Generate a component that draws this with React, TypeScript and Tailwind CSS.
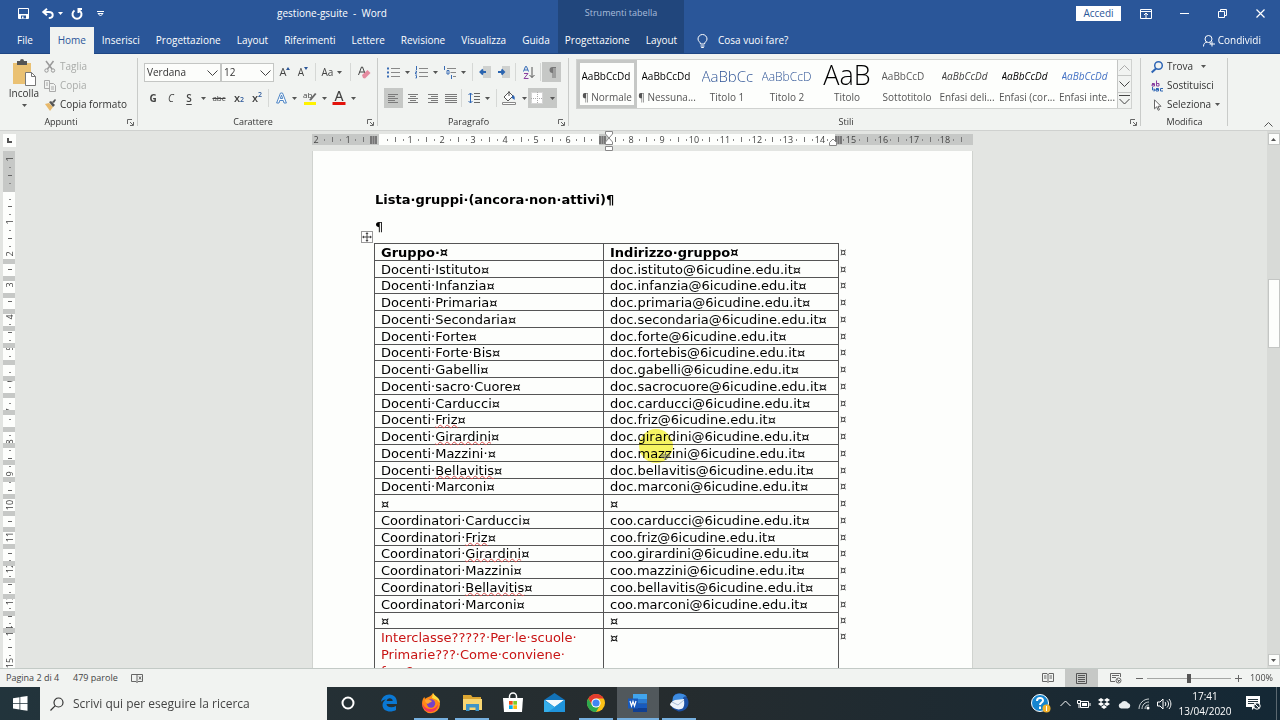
import React from "react";

type Kids = { children?: React.ReactNode };

function Icon({ w, h, children, className = "" }: Kids & { w: number; h: number; className?: string }) {
  return (
    <svg width={w} height={h} viewBox={`0 0 ${w} ${h}`} fill="none" className={`shrink-0 overflow-visible ${className}`} aria-hidden="true">
      {children}
    </svg>
  );
}

function Caret() {
  return (
    <Icon w={5} h={3}>
      <path d="M0 0h5L2.5 3z" fill="#555" />
    </Icon>
  );
}

function Tool({ label, className, children }: Kids & { label: string; className: string }) {
  return (
    <button type="button" aria-label={label} className={`flex h-5 shrink-0 items-center justify-center ${className}`}>
      {children}
    </button>
  );
}

function Sep({ className = "" }: { className?: string }) {
  return <span className={`h-[18px] w-px shrink-0 bg-[#d6d8d6] ${className}`} />;
}

function Launcher() {
  return (
    <button type="button" aria-label="Altre opzioni" className="absolute right-1 bottom-1">
      <Icon w={7} h={7}>
        <path d="M.5 5V.5H5M3 3l3 3M6.5 3v3.500H3" stroke="#666" />
      </Icon>
    </button>
  );
}

function Group({ label, className, launcher = true, children }: Kids & { label: string; className: string; launcher?: boolean }) {
  return (
    <section aria-label={label} className={`relative flex shrink-0 flex-col ${className}`}>
      <div className="flex h-[61px] flex-col">{children}</div>
      <div className={`h-4 text-center text-[9px] leading-4 text-[#333] ${launcher ? "pr-4" : ""}`}>{label}</div>
      {launcher && <Launcher />}
      <span className="absolute top-1 right-0 bottom-1 w-px bg-[#c9cbc9]" />
    </section>
  );
}

function Tab({ children }: Kids) {
  return (
    <button type="button" className="h-[27px] shrink-0 px-2 text-[10px] text-white">
      {children}
    </button>
  );
}

function TitleBar() {
  return (
    <header className="flex h-[54px] shrink-0 border-b border-[#1e4684] bg-[#2a5699] text-white">
      <div className="w-[558px] shrink-0">
        <div className="flex h-[27px] items-center pl-[18px]">
          <button type="button" aria-label="Salva" className="w-6">
            <Icon w={11} h={11}>
              <path d="M.5.5h10v10H.5z" stroke="#fff" />
              <path d="M1 6h9v4.500H1z" fill="#fff" />
              <path d="M3 7.500h5v3H3z" fill="#2a5699" />
              <path d="M4 8.500h1.500v2H4z" fill="#fff" />
            </Icon>
          </button>
          <button type="button" aria-label="Annulla" className="flex items-center gap-1">
            <Icon w={12} h={11}>
              <path d="M5 .8 1.300 4 5 7.200M1.500 4h5.300c5.200 0 5.200 6 0 6" stroke="#fff" strokeWidth="2" />
            </Icon>
            <Icon w={5} h={3}>
              <path d="M0 0h5L2.500 3z" fill="#fff" />
            </Icon>
          </button>
          <button type="button" aria-label="Ripeti" className="ml-2">
            <Icon w={12} h={12}>
              <path d="M3.500 2.500a4.500 4.500 0 1 0 5 0M11 1H7.500v4" stroke="#fff" strokeWidth="2" />
            </Icon>
          </button>
          <button type="button" aria-label="Personalizza barra di accesso rapido" className="ml-[14px]">
            <Icon w={7} h={6}>
              <path d="M0 .5h7M1 2.500h5L3.500 5z" stroke="#fff" />
            </Icon>
          </button>
          <h1 className="ml-auto pr-[171px] text-[10px] whitespace-pre">gestione-gsuite  -  Word</h1>
        </div>
        <nav aria-label="Schede" className="flex pl-[9px]">
          <Tab>File</Tab>
          <button type="button" className="ml-[9px] h-[27px] w-[44px] shrink-0 bg-[#f1f3f1] text-center text-[10px] text-[#2a5699]">
            Home
          </button>
          {["Inserisci", "Progettazione", "Layout", "Riferimenti", "Lettere", "Revisione", "Visualizza", "Guida"].map((t) => (
            <Tab key={t}>{t}</Tab>
          ))}
        </nav>
      </div>
      <div className="w-[126px] shrink-0 bg-[#21467c]">
        <div className="h-[27px] text-center text-[9px] leading-[26px] text-[#a9bddb]">Strumenti tabella</div>
        <div className="flex justify-center">
          <Tab>Progettazione</Tab>
          <Tab>Layout</Tab>
        </div>
      </div>
      <div className="flex-1">
        <div className="flex h-[27px] items-center justify-end pr-px">
          <button type="button" className="mr-[6px] h-[15px] w-[45px] bg-white text-[10px] leading-[15px] text-[#2a5699]">
            Accedi
          </button>
          <Tool label="Opzioni barra multifunzione" className="w-[38px]">
            <Icon w={12} h={10}>
              <path d="M.5.5h11v9H.5zM0 2.500h12M6 9V4M4 6l2-2 2 2" stroke="#fff" />
            </Icon>
          </Tool>
          <Tool label="Riduci a icona" className="w-[38px]">
            <Icon w={9} h={9}>
              <path d="M0 4.500h9" stroke="#fff" />
            </Icon>
          </Tool>
          <Tool label="Ripristina" className="w-[38px]">
            <Icon w={9} h={9}>
              <path d="M.5 2.500h6v6h-6zM2.500 2.500v-2h6v6h-2" stroke="#fff" />
            </Icon>
          </Tool>
          <Tool label="Chiudi" className="w-[38px]">
            <Icon w={9} h={9}>
              <path d="m.5.5 8 8m0-8-8 8" stroke="#fff" strokeWidth="1.200" />
            </Icon>
          </Tool>
        </div>
        <div className="flex h-[27px] items-center justify-between pr-[19px] pl-[13px] text-[10px]">
          <button type="button" className="flex items-center gap-[10px]">
            <Icon w={11} h={14}>
              <path d="M3.500 10c0-2-2.500-2.500-2.500-5a4.500 4.500 0 0 1 9 0c0 2.500-2.500 3-2.500 5zM3.500 12h4M4.200 13.500h2.600" stroke="#fff" />
            </Icon>
            Cosa vuoi fare?
          </button>
          <button type="button" className="flex items-center gap-[3px]">
            <Icon w={12} h={12}>
              <circle cx="5.500" cy="4" r="3.500" stroke="#fff" />
              <path d="M.5 11.500c0-3 1.500-4 3.500-4.500M6.500 7.500 8 8.500M9 6.500v5M6.500 9H12" stroke="#fff" />
            </Icon>
            Condividi
          </button>
        </div>
      </div>
    </header>
  );
}

function ListLines({ marks }: { marks: React.ReactNode }) {
  return (
    <Icon w={13} h={13}>
      <path d="M4 2.500h9M4 6.500h9M4 10.500h9" stroke="#888" />
      {marks}
    </Icon>
  );
}

function AlignIcon({ widths, anchor }: { widths: number[]; anchor: "l" | "c" | "r" }) {
  return (
    <Icon w={12} h={9}>
      {widths.map((w, i) => (
        <rect key={i} x={anchor === "l" ? 0 : anchor === "c" ? (12 - w) / 2 : 12 - w} y={i * 2} width={w} height="1" fill="#7a7a7a" />
      ))}
    </Icon>
  );
}

function FontSelect({ value, label, className }: { value: string; label: string; className: string }) {
  return (
    <div className={`relative h-[19px] shrink-0 ${className}`}>
      <select aria-label={label} defaultValue={value} className="block size-full appearance-none border border-[#c4c6c4] bg-[#fcfdfb] pl-[2px] text-[10px] leading-4 text-[#333]">
        <option>{value}</option>
      </select>
      <Icon w={11} h={6} className="pointer-events-none absolute top-[7px] right-[3px]">
        <path d="m.5.500 5 5 5-5" stroke="#444" />
      </Icon>
    </div>
  );
}

const styles: { sample: string; name: string; look: string }[] = [
  { sample: "AaBbCcDd", name: "¶ Normale", look: "text-[10px] text-black" },
  { sample: "AaBbCcDd", name: "¶ Nessuna...", look: "text-[10px] text-black" },
  { sample: "AaBbCc", name: "Titolo 1", look: "text-[15px] font-light text-[#2f5496]" },
  { sample: "AaBbCcD", name: "Titolo 2", look: "text-[12px] font-light text-[#2f5496]" },
  { sample: "AaB", name: "Titolo", look: "text-[27px] leading-none font-light text-black" },
  { sample: "AaBbCcD", name: "Sottotitolo", look: "text-[10px] text-[#5a5a5a]" },
  { sample: "AaBbCcDd", name: "Enfasi deli...", look: "text-[10px] italic text-[#404040]" },
  { sample: "AaBbCcDd", name: "Enfasi (cor...", look: "text-[10px] italic text-black" },
  { sample: "AaBbCcDd", name: "Enfasi inte...", look: "text-[10px] italic text-[#4472c4]" },
];

function Ribbon() {
  return (
    <div className="relative flex h-[77px] shrink-0 border-b border-[#cfd1cf] bg-[#f1f3f1] text-[#444]">
      <Group label="Appunti" className="w-[138px]">
        <div className="flex pt-[3px]">
          <button type="button" className="flex w-[44px] flex-col items-center pt-[3px] pl-1 text-[10px] leading-[14px] text-[#333]">
            <Icon w={24} h={26}>
              <path d="M1 3h18v21H1z" fill="#eac173" />
              <path d="M5 1h3a2 2 0 0 1 4 0h3v4H5z" fill="#555" />
              <path d="M13.500 12.500h6l4 4v9h-10z" fill="#fff" stroke="#777" />
              <path d="M19.500 12.500v4h4" stroke="#777" />
            </Icon>
            Incolla
            <span className="pt-1">
              <Caret />
            </span>
          </button>
          <div className="flex flex-col text-[10px]">
            <button type="button" className="flex h-[19px] items-center gap-[4px] text-[#a9aba9]">
              <Icon w={12} h={12}>
                <path d="M2 0l6 8M9.500 0 3.500 8" stroke="#999" strokeWidth="1.500" />
                <circle cx="2.500" cy="9.500" r="1.700" stroke="#999" />
                <circle cx="9" cy="9.500" r="1.700" stroke="#999" />
              </Icon>
              Taglia
            </button>
            <button type="button" className="flex h-[19px] items-center gap-[4px] text-[#a9aba9]">
              <Icon w={12} h={12}>
                <path d="M.5.500h5v8h-5zM2 3h2M2 5h2" stroke="#aaa" />
                <path d="M5.500 3.500h4l2 2v6h-6z" fill="#f1f3f1" stroke="#aaa" />
                <path d="M7 7h3M7 9h3" stroke="#aaa" />
              </Icon>
              Copia
            </button>
            <button type="button" className="flex h-[19px] items-center gap-[4px] whitespace-nowrap text-[#333]">
              <Icon w={12} h={12}>
                <path d="m1 5 4-1 4 4-3 4z" fill="#e8b96b" />
                <path d="m5 3 2-1 4 4-2 2zM8 3l3-3 1 1-2 3z" fill="#555" />
              </Icon>
              Copia formato
            </button>
          </div>
        </div>
      </Group>

      <Group label="Carattere" className="w-[240px] pl-[6px]">
        <div className="mt-[6px] flex h-[24px] items-center">
          <FontSelect value="Verdana" label="Tipo di carattere" className="w-[77px]" />
          <FontSelect value="12" label="Dimensione carattere" className="w-[53px]" />
          <Tool label="Aumenta dimensione" className="ml-[2px] w-[18px] text-[11px]">
            A<Icon w={4} h={10}><path d="M0 3 2 0l2 3z" fill="#2a5699" /></Icon>
          </Tool>
          <Tool label="Riduci dimensione" className="w-[18px] text-[10px]">
            A<Icon w={4} h={10}><path d="M0 0h4L2 3z" fill="#2a5699" /></Icon>
          </Tool>
          <Sep className="ml-[3px]" />
          <Tool label="Maiuscole/minuscole" className="ml-[4px] w-[24px] gap-1 text-[10px]">
            Aa <Caret />
          </Tool>
          <Sep className="ml-[6px]" />
          <Tool label="Cancella formattazione" className="ml-[5px] w-[16px]">
            <Icon w={13} h={13}>
              <path d="m.5 9 3-8h1l3 8M1.500 6h5" stroke="#444" />
              <path d="m4 9 5.500-5 3 3L7 12.500l-2-.5z" fill="#e58ba0" />
            </Icon>
          </Tool>
        </div>
        <div className="mt-[2px] flex h-[24px] items-center">
          <Tool label="Grassetto" className="w-[18px] text-[10px] font-bold">G</Tool>
          <Tool label="Corsivo" className="w-[18px] text-[10px] italic">C</Tool>
          <Tool label="Sottolineato" className="w-[28px] gap-[9px] pl-1 text-[10px] font-semibold"><span className="underline underline-offset-2">S</span><Caret /></Tool>
          <Tool label="Barrato" className="w-[22px] text-[8px] line-through">abc</Tool>
          <Tool label="Pedice" className="w-[18px] text-[11px] font-semibold">x<sub className="text-[7px] text-[#2a5699]">2</sub></Tool>
          <Tool label="Apice" className="w-[18px] text-[11px] font-semibold">x<sup className="text-[7px] text-[#2a5699]">2</sup></Tool>
          <Sep className="ml-[2px]" />
          <Tool label="Effetti testo" className="ml-[5px] w-[24px] gap-[5px]">
            <Icon w={11} h={12}>
              <path d="M.6 11 4.500 1h2l3.900 10H8L7.300 8.500H3.700L3 11zM4.300 6.500h2.400L5.500 3z" fill="#fff" stroke="#4f86c6" />
            </Icon>
            <Caret />
          </Tool>
          <Tool label="Evidenziatore" className="ml-[4px] w-[26px] gap-[5px]">
            <Icon w={14} h={14}>
              <text x="0" y="7" fontSize="8" fill="#444" fontFamily="Open Sans">ab</text>
              <path d="m6 9 6-7 1.500 1L8 9.500z" fill="#666" />
              <path d="M1 11h12v3H1z" fill="#fff200" />
            </Icon>
            <Caret />
          </Tool>
          <Tool label="Colore carattere" className="ml-[3px] w-[26px] gap-[5px]">
            <Icon w={14} h={14}>
              <path d="M2.500 10 6.300 0h1.500l3.700 10H10L9 7H5l-1 3zM5.500 5.700h3L7 1.700z" fill="#444" />
              <path d="M.5 11h13v3H.5z" fill="#e3120b" />
            </Icon>
            <Caret />
          </Tool>
        </div>
      </Group>

      <Group label="Paragrafo" className="w-[191px] pl-[6px]">
        <div className="mt-[6px] flex h-[24px] items-center">
          <Tool label="Elenchi puntati" className="w-[28px] gap-[5px]">
            <ListLines marks={<path d="M0 1.500h2v2H0zM0 5.500h2v2H0zM0 9.500h2v2H0z" fill="#3a6cb4" />} />
            <Caret />
          </Tool>
          <Tool label="Elenchi numerati" className="w-[28px] gap-[5px]">
            <ListLines marks={<path d="M1.500 0v4M.5 5h1v1.500h-1V8H2M.5 9.500h1V12h-1" stroke="#3a6cb4" />} />
            <Caret />
          </Tool>
          <Tool label="Elenco a più livelli" className="w-[28px] gap-[5px]">
            <Icon w={13} h={13}>
              <path d="M1.500 0v4M4 4.500h2V8H4zM8.500 9v4" stroke="#3a6cb4" />
              <path d="M4 2.500h9M7.500 6.500H13M10 10.500h3" stroke="#888" />
            </Icon>
            <Caret />
          </Tool>
          <Sep className="ml-[4px]" />
          <Tool label="Riduci rientro" className="ml-[3px] w-[18px]">
            <Icon w={12} h={12}>
              <path d="M4 0h8v12H4z" fill="#cfd1cf" />
              <path d="M7 6H1.500M4 3.500 1.500 6 4 8.500" stroke="#2a64b0" strokeWidth="2" />
            </Icon>
          </Tool>
          <Tool label="Aumenta rientro" className="w-[20px]">
            <Icon w={12} h={12}>
              <path d="M4 0h8v12H4z" fill="#cfd1cf" />
              <path d="M0 6h5.500M3.500 3.500 6 6 3.500 8.500" stroke="#2a64b0" strokeWidth="2" />
            </Icon>
          </Tool>
          <Sep className="ml-[1px]" />
          <Tool label="Ordina" className="ml-[3px] w-[20px]">
            <Icon w={12} h={13}>
              <path d="m.5 5.500 2-5h1l2 5M1.300 4h3.400" stroke="#2f66b5" />
              <path d="M1 7.500h4l-4 5h4.500" stroke="#8a3fa0" />
              <path d="M9 1v10.500M6.500 9 9 11.500 11.500 9" stroke="#555" />
            </Icon>
          </Tool>
          <Sep className="ml-[1px]" />
          <Tool label="Mostra tutto" className="ml-px w-[19px] bg-[#c6c8c6]">
            <Icon w={8} h={11}>
              <path d="M4 0h4v1H7.500v10h-1V1h-1v10h-1V6a3 3 0 0 1 0-6z" fill="#777" />
            </Icon>
          </Tool>
        </div>
        <div className="mt-[2px] flex h-[24px] items-center">
          <Tool label="Allinea a sinistra" className="w-[19px] bg-[#c6c8c6]"><AlignIcon widths={[10, 7, 10, 7, 10]} anchor="l" /></Tool>
          <Tool label="Centra" className="w-[19px]"><AlignIcon widths={[10, 6, 10, 6, 10]} anchor="c" /></Tool>
          <Tool label="Allinea a destra" className="w-[19px]"><AlignIcon widths={[10, 7, 10, 7, 10]} anchor="r" /></Tool>
          <Tool label="Giustifica" className="w-[19px]"><AlignIcon widths={[12, 12, 12, 12, 12]} anchor="l" /></Tool>
          <Sep className="ml-[1px]" />
          <Tool label="Interlinea" className="ml-[4px] w-[26px] gap-[5px]">
            <Icon w={12} h={12}>
              <path d="M2.500 1v10M.5 3l2-2 2 2M.5 9l2 2 2-2" stroke="#2f66b5" />
              <path d="M6 1.500h6M6 4.500h6M6 7.500h6M6 10.500h6" stroke="#666" />
            </Icon>
            <Caret />
          </Tool>
          <Sep className="ml-[4px]" />
          <Tool label="Sfondo" className="ml-[3px] w-[28px] gap-[6px]">
            <Icon w={14} h={14}>
              <path d="m2 6 5-5 4 4-5 5zM7 1V0M7 1v4" stroke="#555" fill="#fff" />
              <path d="M11 4c2 1 2 3 1.500 5-1-1-2-2-3-2z" fill="#2f66b5" />
              <path d="M.5 11.500h13v2H.5z" stroke="#888" fill="#fff" />
            </Icon>
            <Caret />
          </Tool>
          <Tool label="Bordi" className="w-[29px] gap-[7px] bg-[#c6c8c6]">
            <Icon w={12} h={12}>
              <path d="M0 0h12v12H0z" fill="#fff" />
              <path d="M.5.500h11v11H.5zM6.500 0v12M0 6.500h12" stroke="#aaa" strokeDasharray="1 1" />
            </Icon>
            <Caret />
          </Tool>
        </div>
      </Group>

      <Group label="Stili" className="w-[572px] pr-[9px] pl-[7px]">
        <div className="mt-[5px] flex h-[50px] border border-[#d0d2d0] bg-[#fdfefc]">
          {styles.map((s, i) => (
            <button
              key={s.name}
              type="button"
              className={`flex w-[60px] shrink-0 flex-col items-center overflow-hidden ${i === 0 ? "outline-3 -outline-offset-3 outline-[#c6c8c6]" : ""}`}
            >
              <span className={`flex h-[29px] w-[51px] items-center overflow-hidden whitespace-nowrap ${i === 4 ? "justify-center" : "pt-1"} ${s.look}`}>{s.sample}</span>
              <span className="h-[17px] text-[10px] leading-[17px] whitespace-nowrap text-[#555]">{s.name}</span>
            </button>
          ))}
          <div className="ml-auto flex w-[14px] flex-col divide-y divide-[#c4c6c4] border-l border-[#c4c6c4] bg-[#f1f3f1]">
            <button type="button" aria-label="Stili precedenti" className="flex flex-1 items-center justify-center">
              <Icon w={11} h={6}><path d="m.5 5.500 5-5 5 5" stroke="#aaa" /></Icon>
            </button>
            <button type="button" aria-label="Stili successivi" className="flex flex-1 items-center justify-center">
              <Icon w={11} h={6}><path d="m.5.500 5 5 5-5" stroke="#444" /></Icon>
            </button>
            <button type="button" aria-label="Altri stili" className="flex flex-1 items-center justify-center">
              <Icon w={11} h={10}><path d="M0 .5h11M.5 4l5 5 5-5" stroke="#444" /></Icon>
            </button>
          </div>
        </div>
      </Group>

      <Group label="Modifica" launcher={false} className="w-[87px]">
        <div className="flex flex-col pt-[3px] pl-[10px] text-[10px] text-[#333]">
          <button type="button" className="flex h-[19px] items-center gap-[4px]">
            <Icon w={12} h={12}>
              <circle cx="7.500" cy="4.500" r="3.800" stroke="#2f66b5" strokeWidth="1.500" />
              <path d="M5 7.500.7 11.500" stroke="#2f66b5" strokeWidth="2" />
            </Icon>
            <span className="mr-1">Trova</span> <Caret />
          </button>
          <button type="button" className="flex h-[19px] items-center gap-[4px]">
            <Icon w={12} h={12}>
              <path d="M1 3.500h2.500v2.500H1V4.500h2M5.500.500V6H8V3.500H5.500" stroke="#8a3fa0" />
              <path d="M5 8.500h2.500V11H5V9.500h2M12 8.500H9.500V11H12M1.500 7v3H4M3 8.500 4.200 10 3 11.500" stroke="#2f66b5" />
            </Icon>
            Sostituisci
          </button>
          <button type="button" className="flex h-[19px] items-center gap-[4px]">
            <Icon w={12} h={12}>
              <path d="M3.500.8v9l2.200-2 1.500 3.500 1.300-.6L7 7.300h3z" stroke="#666" fill="#fff" />
            </Icon>
            Seleziona <Caret />
          </button>
        </div>
      </Group>
      <button type="button" aria-label="Comprimi barra multifunzione" className="absolute right-[7px] bottom-[3px]">
        <Icon w={9} h={5}><path d="m.5 4.500 4-4 4 4" stroke="#555" /></Icon>
      </button>
    </div>
  );
}

const CM = 31.47;

function HorizontalRuler() {
  const zero = 67;
  const quarters = Array.from({ length: 83 }, (_, i) => i - 8);
  return (
    <svg width="661" height="20" className="block shrink-0" aria-hidden="true" fontFamily="Open Sans" fontSize="9">
      <rect x="0" y="3" width="661" height="11" fill="#c6c8c6" />
      <rect x={zero} y="3" width="220" height="11" fill="#fdfefc" />
      <rect x="297" y="3" width="226" height="11" fill="#fdfefc" />
      {quarters.map((q) => {
        const x = Math.round(zero + (q * CM) / 4);
        const n = q / 4;
        if (x < 3 || x > 659 || n === 0 || n === 7 || (x > 57 && x < 68) || (x > 284 && x < 303) || (x > 515 && x < 530)) return null;
        if (q % 4 === 0) return <text key={q} x={x} y="12" textAnchor="middle" fill="#444">{Math.abs(n)}</text>;
        return q % 2 === 0 ? <rect key={q} x={x} y="6" width="1" height="5" fill="#777" /> : <rect key={q} x={x} y="8" width="1" height="2" fill="#888" />;
      })}
      {[58, 287, 523].map((x) => (
        <g key={x}>
          <rect x={x} y="5" width="7" height="8" fill="#777" />
          <path d={`M${x + 2.5} 5v8M${x + 4.5} 5v8`} stroke="#999" />
        </g>
      ))}
      <path d="M293.500.500h7v2.500l-3.500 4-3.500-4zM297 7l3.500 4v2.500h-7V11z" fill="#fff" stroke="#888" />
      <path d="M293.500 15.500h7v4h-7z" fill="#fff" stroke="#888" />
      <path d="m521 8-3.500 3.500v3h7v-3z" fill="#fff" stroke="#888" />
    </svg>
  );
}

function VerticalRuler() {
  const zero = 39.7;
  const quarters = Array.from({ length: 66 }, (_, i) => i - 4);
  const bands = Array.from({ length: 23 }, (_, i) => Math.round(108 + i * 16.77));
  return (
    <svg width="12" height="517" className="block shrink-0" aria-hidden="true" fontFamily="Open Sans" fontSize="9">
      <rect width="12" height="41" fill="#c6c8c6" />
      <rect y="41" width="12" height="476" fill="#fdfefc" />
      {quarters.map((q) => {
        const y = Math.round(zero + (q * CM) / 4);
        if (q === 0 || y > 516) return null;
        if (q % 4 === 0)
          return (
            <text key={q} transform={`translate(10 ${y}) rotate(-90)`} textAnchor="middle" fill="#444">
              {Math.abs(q / 4)}
            </text>
          );
        return q % 2 === 0 ? <rect key={q} x="5" y={y} width="4" height="1" fill="#666" /> : <rect key={q} x="6" y={y} width="2" height="1" fill="#888" />;
      })}
      {bands.map((y) => (
        <rect key={y} y={y} width="12" height="5" fill="#c6c8c6" />
      ))}
    </svg>
  );
}

type Row = [string, string, string];
const rows: Row[] = [
  ["Docenti·Istituto", "", "doc.istituto"],
  ["Docenti·Infanzia", "", "doc.infanzia"],
  ["Docenti·Primaria", "", "doc.primaria"],
  ["Docenti·Secondaria", "", "doc.secondaria"],
  ["Docenti·Forte", "", "doc.forte"],
  ["Docenti·Forte·Bis", "", "doc.fortebis"],
  ["Docenti·Gabelli", "", "doc.gabelli"],
  ["Docenti·sacro·Cuore", "", "doc.sacrocuore"],
  ["Docenti·Carducci", "", "doc.carducci"],
  ["Docenti·", "Friz", "doc.friz"],
  ["Docenti·", "Girardini", "doc.girardini"],
  ["Docenti·Mazzini·", "", "doc.mazzini"],
  ["Docenti·", "Bellavitis", "doc.bellavitis"],
  ["Docenti·Marconi", "", "doc.marconi"],
  ["", "", ""],
  ["Coordinatori·Carducci", "", "coo.carducci"],
  ["Coordinatori·", "Friz", "coo.friz"],
  ["Coordinatori·", "Girardini", "coo.girardini"],
  ["Coordinatori·Mazzini", "", "coo.mazzini"],
  ["Coordinatori·", "Bellavitis", "coo.bellavitis"],
  ["Coordinatori·Marconi", "", "coo.marconi"],
  ["", "", ""],
];

const cell = "border border-[#555] p-0 pl-[6px] text-left whitespace-nowrap";

function EndMark() {
  return <td className="p-0 pl-px text-[10px] text-[#333]">¤</td>;
}

function GroupTable() {
  return (
    <table className="ml-[61px] w-[476px] table-fixed border-collapse text-[13px] leading-[15px] [&_tr]:h-[17px] [&_tr:nth-child(4n+3)]:h-[16px]">
      <colgroup>
        <col className="w-[229px]" />
        <col className="w-[235px]" />
        <col />
      </colgroup>
      <tbody>
        <tr>
          <th className={cell}>Gruppo·¤</th>
          <th className={cell}>Indirizzo·gruppo¤</th>
          <EndMark />
        </tr>
        {rows.map(([text, flagged, user], i) => (
          <tr key={i}>
            <td className={cell}>
              {text}
              {flagged && <span className="underline decoration-[#dc5050] decoration-wavy decoration-1 underline-offset-0 [text-decoration-skip-ink:none]">{flagged}</span>}¤
            </td>
            <td className={cell}>{user && `${user}@6icudine.edu.it`}¤</td>
            <EndMark />
          </tr>
        ))}
        <tr className="align-top">
          <td className={`${cell} leading-[17px] text-[#c81414]`}>
            Interclasse?????·Per·le·scuole·
            <br />
            Primarie???·Come·conviene·
            <br />
            fare?¤
          </td>
          <td className={`${cell} leading-[17px]`}>¤</td>
          <EndMark />
        </tr>
      </tbody>
    </table>
  );
}

function Workspace() {
  return (
    <div className="flex min-h-0 flex-1 bg-[#e3e5e2]">
      <div className="flex w-[18px] shrink-0 flex-col overflow-hidden pl-[3px]">
        <button type="button" aria-label="Tabulazione" className="mt-[3px] mb-1 flex size-[13px] shrink-0 items-center justify-center bg-[#fdfefc]">
          <Icon w={5} h={5}><path d="M1 0v4h4" stroke="#555" strokeWidth="2" /></Icon>
        </button>
        <VerticalRuler />
      </div>
      <main className="flex min-w-0 flex-1 flex-col items-center overflow-hidden">
        <HorizontalRuler />
        <article className="relative min-h-0 w-[661px] flex-1 overflow-hidden border-x border-[#d0d3cf] bg-[#fdfefc] font-['DejaVu_Sans',sans-serif] text-black">
          <h2 className="mt-[39px] ml-[62px] h-[27px] text-[13px] leading-5 font-bold">Lista·gruppi·(ancora·non·attivi)¶</h2>
          <p className="ml-[62px] h-[26px] text-[13px] leading-5">¶</p>
          <GroupTable />
          <span className="absolute top-[80px] left-[48px] flex size-[12px] items-center justify-center border border-[#999] bg-white">
            <Icon w={10} h={10}>
              <path d="M5 1v8M1 5h8" stroke="#444" />
              <path d="m5 0 1.500 2h-3zM5 10 3.500 8h3zM0 5l2-1.500v3zM10 5 8 6.500v-3z" fill="#444" />
            </Icon>
          </span>
          <span className="absolute top-[278px] left-[326px] size-[34px] rounded-full bg-[#f7f33c] opacity-80 mix-blend-multiply" />
          <Icon w={9} h={10} className="absolute top-[300px] left-[348px]">
            <path d="M0 4h9M0 6h9M4.500 6v3M3 7.500 4.500 9 6 7.500M4.500 4V1" stroke="#666" />
          </Icon>
        </article>
      </main>
      <div className="flex w-[13px] shrink-0 flex-col items-center bg-[#d8dad7]">
        <button type="button" aria-label="Scorri su" className="mt-[2px] flex h-3 w-[12px] items-center justify-center border border-[#c4c6c4] bg-[#fdfefc]">
          <Icon w={5} h={3}><path d="M0 3h5L2.500 0z" fill="#555" /></Icon>
        </button>
        <span className="flex-[135]" />
        <span className="h-[69px] w-[12px] border border-[#c4c6c4] bg-[#fdfefc]" />
        <span className="flex-[307]" />
        <button type="button" aria-label="Scorri giù" className="mb-[2px] flex h-3 w-[12px] items-center justify-center border border-[#c4c6c4] bg-[#fdfefc]">
          <Caret />
        </button>
      </div>
    </div>
  );
}

function StatusBar() {
  return (
    <footer className="flex h-[19px] shrink-0 items-center border-t border-[#c3cac6] bg-[#f1f3f1] text-[9px] text-[#444]">
      <span className="ml-[6px] w-[67px]">Pagina 2 di 4</span>
      <span className="w-[58px]">479 parole</span>
      <Icon w={12} h={10}>
        <path d="M6 1.500v8M6 1.500H.5v7H5L6 9.500l1-1h4.500v-7zM8 3.500l2 3m0-3-2 3" stroke="#666" />
      </Icon>
      <div className="ml-auto flex h-full items-center">
        <Tool label="Modalità lettura" className="w-[34px]">
          <Icon w={12} h={10}>
            <path d="M.5.500H5L6 1.500l1-1h4.500v8H7L6 9.500l-1-1H.5zM6 1v8M2 3h2.500M2 5h2.500M7.500 3H10M7.500 5H10" stroke="#666" />
          </Icon>
        </Tool>
        <Tool label="Layout di stampa" className="max-h-full w-[33px] bg-[#c6c8c6]">
          <Icon w={11} h={11}><path d="M.5.500h10v10H.5zM2 2.500h7M2 4.500h7M2 6.500h7M2 8.500h7" stroke="#555" /></Icon>
        </Tool>
        <Tool label="Layout Web" className="w-[35px]">
          <Icon w={12} h={11}>
            <path d="M10.500 4V.5H.5v8H5M2 2.500h7M2 4.500h4" stroke="#666" />
            <circle cx="8.500" cy="7.500" r="2.500" stroke="#666" />
            <path d="M7 6.500 9 8M8 9l2-2" stroke="#666" />
          </Icon>
        </Tool>
        <button type="button" aria-label="Zoom indietro" className="ml-[3px]"><Icon w={7} h={7}><path d="M0 3.500h7" stroke="#666" /></Icon></button>
        <input
          type="range"
          aria-label="Zoom"
          defaultValue={50}
          className="mx-[4px] h-[10px] w-[84px] appearance-none bg-[linear-gradient(#a5a7a5,#a5a7a5)] bg-[length:100%_1px] bg-center bg-no-repeat [&::-webkit-slider-thumb]:h-[9px] [&::-webkit-slider-thumb]:w-1 [&::-webkit-slider-thumb]:appearance-none [&::-webkit-slider-thumb]:bg-[#555]"
        />
        <button type="button" aria-label="Zoom avanti"><Icon w={7} h={7}><path d="M0 3.500h7M3.500 0v7" stroke="#666" /></Icon></button>
        <span className="w-[38px] pr-[7px] text-right">100%</span>
      </div>
    </footer>
  );
}

function Task({ label, running = false, active = false, children }: Kids & { label: string; running?: boolean; active?: boolean }) {
  return (
    <button type="button" aria-label={label} className={`flex flex-1 flex-col items-center ${active ? "bg-[#51585c]" : ""}`}>
      <span className="flex flex-1 items-center">{children}</span>
      <span className={`h-[2px] ${active ? "w-full" : "w-[34px]"} ${running ? "bg-[#76b0e0]" : ""}`} />
    </button>
  );
}

function Taskbar() {
  return (
    <div className="flex h-[33px] shrink-0 bg-linear-to-r from-[#22343c] via-[#262c2e] to-[#142835] text-white">
      <button type="button" aria-label="Start" className="flex w-[40px] items-center justify-center">
        <Icon w={15} h={15}>
          <path d="M0 2.200 6.500 1.200V7H0zM7.300 1.100 14.500 0v7H7.300zM0 7.800h6.500v5.800L0 12.600zM7.300 7.800h7.200v7L7.300 13.700z" fill="#fff" />
        </Icon>
      </button>
      <label className="flex w-[287px] items-center bg-[#f1f3f1] pl-[10px]">
        <Icon w={14} h={14}>
          <circle cx="8.500" cy="5.500" r="4.500" stroke="#333" strokeWidth="1.200" />
          <path d="M5.300 8.700.5 13.500" stroke="#333" strokeWidth="1.200" />
        </Icon>
        <input aria-label="Ricerca" placeholder="Scrivi qui per eseguire la ricerca" className="ml-[9px] w-[230px] bg-transparent text-[12px] text-[#444] outline-none placeholder:text-[#444]" />
      </label>
      <div className="flex w-[373px]">
        <Task label="Cortana">
          <Icon w={14} h={14}><circle cx="7" cy="7" r="5.500" stroke="#fff" strokeWidth="2" /></Icon>
        </Task>
        <Task label="Edge">
          <Icon w={18} h={18}>
            <path d="M1 8C1.500 3.500 5 .5 9.300.5c5 0 8 3.500 7.700 9.500H6.500c.2 3.300 5.500 4.300 9.500 2v4C10.500 19 2.500 17.500 2.500 11 2.500 8.500 4 6.500 6 5.500 3.800 5.800 2 6.700 1 8zm5.700-1h6c0-3.800-5.700-3.800-6 0z" fill="#0a78d4" />
          </Icon>
        </Task>
        <Task label="Firefox" running>
          <Icon w={20} h={20}>
            <path d="M12 0c1 3 7 5 7 11.500A8.700 8.700 0 0 1 1 11C1 8 2 5 3.500 4l.5 2C6 4 10 4 12 0z" fill="#ff8a16" />
            <path d="M12 0c1 3 7 4 7 10l-3-3-5-2z" fill="#ffdc3e" />
            <path d="M1 9c1 4 4 7 8 7 4 0 7-2 8-5 0 10-15 12-16-2z" fill="#f5365c" />
            <circle cx="10" cy="10.500" r="4.200" fill="#7542c8" />
            <path d="M4 7c3-1 5 0 7 1-1 2-3 1-4 3C5 10 4 9 4 7z" fill="#ffa632" />
          </Icon>
        </Task>
        <Task label="Esplora file" running>
          <Icon w={19} h={16}>
            <path d="M0 0h8l1.500 2H18v13H0z" fill="#dca531" />
            <path d="M0 4h19v11H0z" fill="#f8d673" />
            <path d="M3 9h13v7h-3.500v-3.500h-6V16H3z" fill="#3f94c8" />
          </Icon>
        </Task>
        <Task label="Microsoft Store">
          <Icon w={20} h={20}>
            <path d="M6.500 6V3.500a3.500 3.500 0 0 1 7 0V6" stroke="#fff" strokeWidth="1.500" />
            <path d="M0 5h20l-1 14H1z" fill="#fff" />
            <path d="M6 8h3.700v3.700H6z" fill="#f1511b" />
            <path d="M10.300 8H14v3.700h-3.700z" fill="#80cc28" />
            <path d="M6 12.300h3.700V16H6z" fill="#00adef" />
            <path d="M10.300 12.300H14V16h-3.700z" fill="#fbbc09" />
          </Icon>
        </Task>
        <Task label="Posta">
          <Icon w={21} h={19}>
            <path d="M0 7 10.500 0 21 7v12H0z" fill="#1272b8" />
            <path d="M1 7h19l-9.500 7z" fill="#f4fafd" />
            <path d="M0 7l10.500 7L21 7v12H0z" fill="#35aeea" />
            <path d="M21 7v12H4z" fill="#1f94dc" />
          </Icon>
        </Task>
        <Task label="Chrome" running>
          <Icon w={18} h={18}>
            <circle cx="9" cy="9" r="9" fill="#fbc116" />
            <path d="M1.200 4.500A9 9 0 0 1 16.800 4.500H9L5.100 11.300z" fill="#e33b2e" />
            <path d="M1.200 4.500 5.100 11.300 9 13.500 12.900 11.300 9 18A9 9 0 0 1 1.200 4.500z" fill="#2da94f" />
            <circle cx="9" cy="9" r="4.600" fill="#fff" />
            <circle cx="9" cy="9" r="3.600" fill="#4285f4" />
          </Icon>
        </Task>
        <Task label="Word" running active>
          <Icon w={19} h={18}>
            <path d="M5 0h14v5H5z" fill="#41a5ee" />
            <path d="M5 5h14v4.500H5z" fill="#2b7cd3" />
            <path d="M5 9.500h14V14H5z" fill="#185abd" />
            <path d="M5 14h14v4H5z" fill="#103f91" />
            <path d="M0 4.500h10v10H0z" fill="#185abd" />
            <path d="m2 7 1.500 5L5 7.500 6.500 12 8 7" stroke="#fff" strokeWidth="1.200" />
          </Icon>
        </Task>
        <Task label="Thunderbird" running>
          <Icon w={20} h={20}>
            <path d="M6 1c6-2 13 1 13.500 8 .3 6-5 10-10 9.500L3 15z" fill="#1b4fa3" />
            <path d="M4 4c2-4 10-5 14 0-3-1-4 0-4 2l-2 5-9-1z" fill="#3d8be0" />
            <path d="M1 12c0-2 2-4 5-5l9-1c0 3 1 6-1 9-4 3-9 1-13-3z" fill="#eef3fa" />
            <path d="m3 9 6 3 6-5" stroke="#a9bcd6" />
          </Icon>
        </Task>
      </div>
      <div className="ml-auto flex items-center">
        <Tool label="Guida" className="w-[30px]">
          <Icon w={20} h={20}>
            <circle cx="9" cy="9" r="8.500" fill="#1585cf" stroke="#fff" />
            <path d="M6 7c0-4 6-4 6-.5 0 2-3 2-3 4.500M9 12.500V15" stroke="#fff" strokeWidth="2" />
            <circle cx="15.500" cy="14.500" r="4" fill="#f2b22d" />
            <path d="M15.500 12v5" stroke="#fff" />
          </Icon>
        </Tool>
        <Tool label="Mostra icone nascoste" className="w-[18px]"><Icon w={11} h={7}><path d="m.5 6 5-5 5 5" stroke="#fff" /></Icon></Tool>
        <Tool label="Batteria" className="w-[20px]">
          <Icon w={14} h={10}><path d="M3.500 2.500h8v6h-8zM13 4v3M.5 1.500h3v3h-3zM2 5v4" stroke="#fff" /><path d="M5 4h5v3H5z" fill="#fff" /></Icon>
        </Tool>
        <Tool label="Dropbox" className="w-[20px]">
          <Icon w={12} h={11}><path d="m3 0 3 2-3 2-3-2zM9 0l3 2-3 2-3-2zM3 4l3 2-3 2-3-2zM9 4l3 2-3 2-3-2zM6 7l3 2-3 2-3-2z" fill="#fff" /></Icon>
        </Tool>
        <Tool label="OneDrive" className="w-[20px]">
          <Icon w={13} h={10}><path d="M3 9.500a2.800 2.800 0 0 1 0-5.500 4 4 0 0 1 7 0 2.800 2.800 0 0 1 0 5.500z" fill="#e8ecee" /></Icon>
        </Tool>
        <Tool label="Wi-Fi" className="w-[20px]">
          <Icon w={12} h={12}><path d="M1 11C1 5.500 5.500 1 11 1M4 11c0-4 3-7 7-7M7 11c0-2.500 1.500-4 4-4" stroke="#ccd3d6" /><circle cx="10" cy="10" r="1.500" fill="#fff" /></Icon>
        </Tool>
        <Tool label="Volume" className="w-[20px]">
          <Icon w={14} h={12}><path d="M.5 4v4H3l3 3V1L3 4zM8 4c1 1 1 3 0 4M10 2.500c2 2 2 5 0 7M12 1c2.500 3 2.500 7 0 10" stroke="#fff" /></Icon>
        </Tool>
        <time className="w-[62px] text-center text-[10px] leading-[15px]">
          17:41
          <br />
          13/04/2020
        </time>
        <Tool label="Notifiche" className="w-[35px]">
          <Icon w={16} h={15}>
            <path d="M0 0h14v11H9l-3 3v-3H0z" fill="#fff" />
            <path d="M2 3.500h10M2 5.500h10M2 7.500h6" stroke="#25343d" />
            <circle cx="11" cy="10" r="3.200" fill="#24343e" stroke="#fff" />
            <path d="m9 8 4 4" stroke="#fff" />
          </Icon>
        </Tool>
        <span className="mr-[3px] ml-[5px] h-[33px] w-px bg-[#5b6870]" />
      </div>
    </div>
  );
}

export default function App() {
  return (
    <div className="flex h-screen min-h-[480px] flex-col overflow-hidden font-['Open_Sans',sans-serif]">
      <TitleBar />
      <Ribbon />
      <Workspace />
      <StatusBar />
      <Taskbar />
    </div>
  );
}
